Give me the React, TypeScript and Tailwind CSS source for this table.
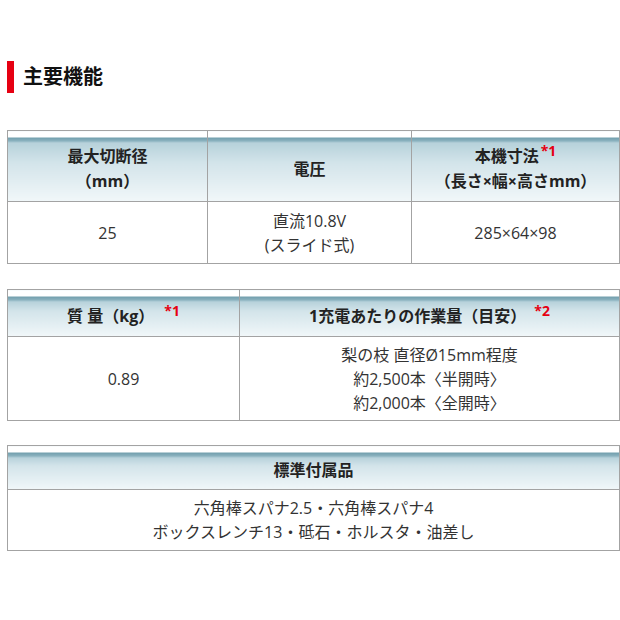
const thBg =
  'bg-[linear-gradient(to_bottom,#ffffff_0px,#ffffff_6px,#6f9dac_6px,#8fb5c2_10px,#b6d1da_11px,#d3e4ea_45%,#f1f7f9_100%)]'

function Note({ n }: { n: string }) {
  return <span className="relative -top-[6px] ml-[2px] text-[14px] font-bold text-[#e60012]">*{n}</span>
}

function Th({ children, w }: { children: React.ReactNode; w?: string }) {
  return (
    <th className={`border border-[#a3a3a3] ${thBg} px-2 pt-[10px] pb-[4px] text-center align-middle text-[16px] font-bold leading-[25px] text-[#222] ${w ?? ''}`}>
      {children}
    </th>
  )
}

function Td({ children }: { children: React.ReactNode }) {
  return (
    <td className="border border-[#a3a3a3] bg-white px-2 py-[4px] text-center align-middle text-[16px] leading-[24px] text-[#333]">
      {children}
    </td>
  )
}

export default function App() {
  return (
    <div className="min-h-[620px] w-[620px] overflow-hidden bg-white pl-[7px] pt-[61px] font-['Open_Sans','Noto_Sans_CJK_JP',sans-serif]">
      <div className="flex items-center">
        <div className="h-[32px] w-[7px] bg-[#e60012]" />
        <h2 className="ml-[9px] text-[20px] font-bold leading-none text-[#111]">主要機能</h2>
      </div>

      <table className="mt-[37px] w-[613px] border-collapse">
        <thead>
          <tr className="h-[71px]">
            <Th w="w-[200px]">最大切断径<br />（mm）</Th>
            <Th w="w-[204px]">電圧</Th>
            <Th>本機寸法<Note n="1" /><br />（長さ×幅×高さmm）</Th>
          </tr>
        </thead>
        <tbody>
          <tr className="h-[62px]">
            <Td>25</Td>
            <Td>直流10.8V<br />(スライド式)</Td>
            <Td>285×64×98</Td>
          </tr>
        </tbody>
      </table>

      <table className="mt-[25px] w-[613px] border-collapse">
        <thead>
          <tr className="h-[47px]">
            <Th w="w-[232px]">質 量（kg）<span className="ml-[8px]" /><Note n="1" /></Th>
            <Th>1充電あたりの作業量（目安）<span className="ml-[6px]" /><Note n="2" /></Th>
          </tr>
        </thead>
        <tbody>
          <tr className="h-[84px]">
            <Td>0.89</Td>
            <Td>梨の枝 直径Ø15mm程度<br />約2,500本〈半開時〉<br />約2,000本〈全開時〉</Td>
          </tr>
        </tbody>
      </table>

      <table className="mt-[24px] w-[613px] border-collapse">
        <thead>
          <tr className="h-[44px]">
            <Th>標準付属品</Th>
          </tr>
        </thead>
        <tbody>
          <tr className="h-[61px]">
            <Td>六角棒スパナ2.5・六角棒スパナ4<br />ボックスレンチ13・砥石・ホルスタ・油差し</Td>
          </tr>
        </tbody>
      </table>
    </div>
  )
}
